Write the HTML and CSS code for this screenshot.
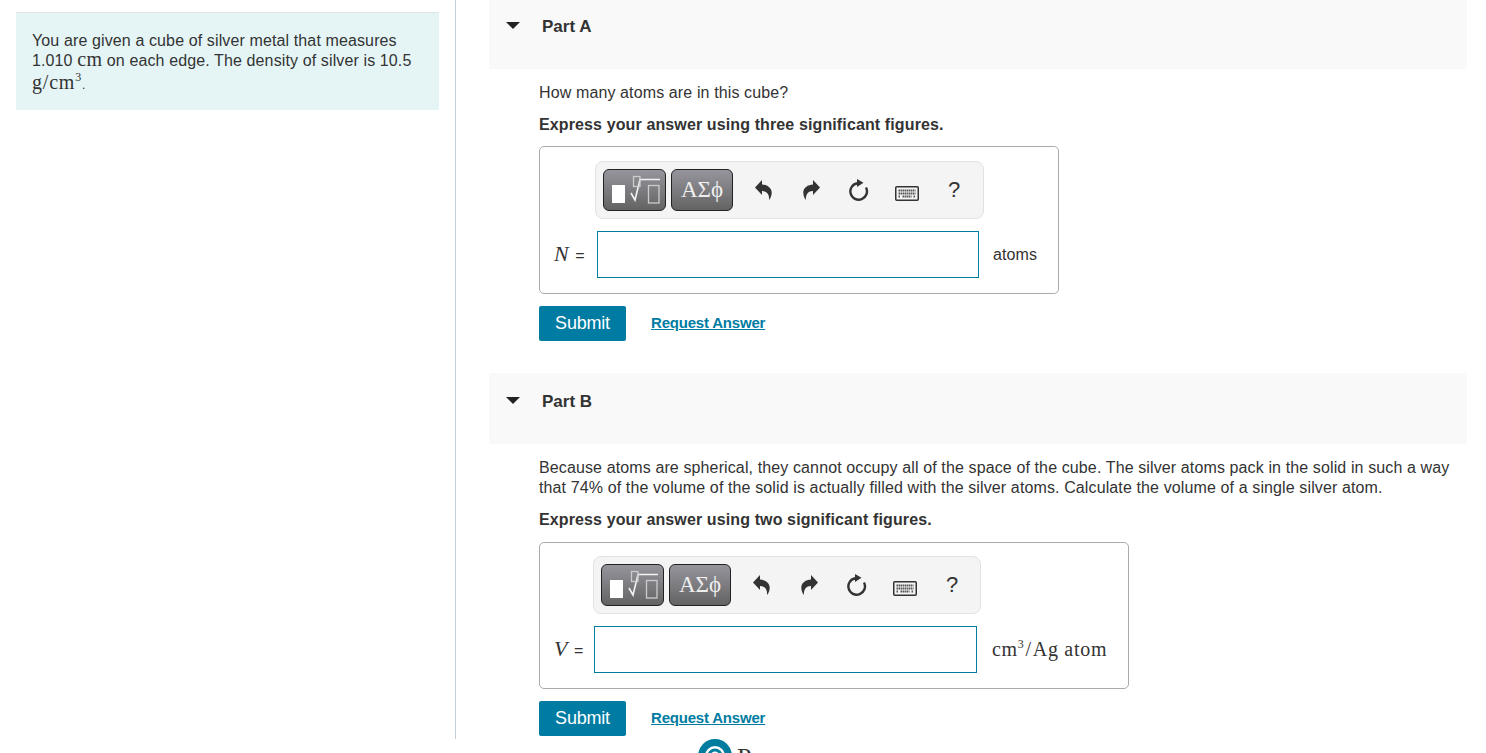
FILE: index.html
```html
<!doctype html>
<html lang="en">
  <head>
    <meta charset="UTF-8" />
    <title>Silver cube</title>
    <link rel="stylesheet" href="styles.css">
  </head>
  <body>
    <svg class="icon-defs" width="0" height="0">
      <symbol id="i-undo" viewBox="0 0 17 20"><path d="M0 7.600 7 0V4.500C12 4.500 17 8 16.700 13 16.500 16 15.500 18.500 14 20 14.500 16 13 11 7 11V15Z"/></symbol>
      <symbol id="i-redo" viewBox="0 0 17 20"><path d="M17 7.600 10 0V4.500C5 4.500 0 8 0.300 13 0.500 16 1.500 18.500 3 20 2.500 16 4 11 10 11V15Z"/></symbol>
      <symbol id="i-reset" viewBox="0 0 21 23"><path class="ring" d="M17 8.500A8.300 8.300 0 1 1 8.500 4.200"/><path d="M8 0 14.500 3.800 8 8Z"/></symbol>
      <symbol id="i-keys" viewBox="0 0 24 15"><rect class="key-frame" x="0.750" y="0.750" width="22.500" height="13.500" rx="1"/><path class="key-row" d="M3.500 4.500H20.500M3.500 7.500H20.500M3.500 10.500H5.500M7.500 10.500H16.500M18.500 10.500H20.500"/></symbol>
    </svg>

    <div class="page">
      <aside class="sidebar">
        <div class="intro">
          You are given a cube of silver metal that measures
          1.010 <span class="math inline">cm</span> on each edge. The density of silver is 10.5
          <span class="math density">g/cm<sup>3</sup></span><span class="dot">.</span>
        </div>
      </aside>

      <main class="parts">
        <section class="part part-a">
          <header class="part-head">
            <span class="caret"></span>
            <h2>Part A</h2>
          </header>
          <div class="part-body">
            <p>How many atoms are in this cube?</p>
            <p class="hint">Express your answer using three significant figures.</p>

            <div class="answer answer-a">
              <div class="toolbar">
                <button class="tpl-btn tpl-root">
                  <span class="block"></span>
                  <svg class="root" viewBox="0 0 32 30"><path class="radical" d="M2 18 6 25 11 4.500H31"/><rect x="4.500" y="1.500" width="6.500" height="10"/><rect x="19.500" y="10.500" width="10.500" height="17.500"/></svg>
                </button>
                <button class="tpl-btn tpl-greek">ΑΣϕ</button>
                <span class="tools">
                  <svg class="tool undo"><use href="#i-undo"/></svg>
                  <svg class="tool redo"><use href="#i-redo"/></svg>
                  <svg class="tool reset"><use href="#i-reset"/></svg>
                  <svg class="tool keys"><use href="#i-keys"/></svg>
                  <span class="help">?</span>
                </span>
              </div>
              <div class="entry">
                <label><span class="var">N</span> =</label>
                <input type="text">
                <span class="unit">atoms</span>
              </div>
            </div>

            <div class="actions">
              <button class="submit">Submit</button>
              <a href="#">Request Answer</a>
            </div>
          </div>
        </section>

        <section class="part part-b">
          <header class="part-head">
            <span class="caret"></span>
            <h2>Part B</h2>
          </header>
          <div class="part-body">
            <p>Because atoms are spherical, they cannot occupy all of the space of the cube. The silver atoms pack in the solid in such a way that 74% of the volume of the solid is actually filled with the silver atoms. Calculate the volume of a single silver atom.</p>
            <p class="hint">Express your answer using two significant figures.</p>

            <div class="answer answer-b">
              <div class="toolbar">
                <button class="tpl-btn tpl-root">
                  <span class="block"></span>
                  <svg class="root" viewBox="0 0 32 30"><path class="radical" d="M2 18 6 25 11 4.500H31"/><rect x="4.500" y="1.500" width="6.500" height="10"/><rect x="19.500" y="10.500" width="10.500" height="17.500"/></svg>
                </button>
                <button class="tpl-btn tpl-greek">ΑΣϕ</button>
                <span class="tools">
                  <svg class="tool undo"><use href="#i-undo"/></svg>
                  <svg class="tool redo"><use href="#i-redo"/></svg>
                  <svg class="tool reset"><use href="#i-reset"/></svg>
                  <svg class="tool keys"><use href="#i-keys"/></svg>
                  <span class="help">?</span>
                </span>
              </div>
              <div class="entry">
                <label><span class="var">V</span> =</label>
                <input type="text">
                <span class="unit math">cm<sup>3</sup><span class="slash">/</span>Ag atom</span>
              </div>
            </div>

            <div class="actions">
              <button class="submit">Submit</button>
              <a href="#">Request Answer</a>
            </div>
          </div>
        </section>

        <footer class="brand">
          <svg class="brand-mark" viewBox="0 0 34 34"><circle class="mark-outer" cx="17" cy="17" r="13.500"/><circle class="mark-inner" cx="17" cy="17" r="6"/></svg>
          <span class="brand-name">Pearson</span>
        </footer>
      </main>
    </div>
  </body>
</html>
```

FILE: styles.css
```css
* {
  margin: 0;
  padding: 0;
  box-sizing: border-box;
}

html,
body {
  height: 753px;
  overflow: hidden;
}

body {
  font-family: 'Liberation Sans', Arial, sans-serif;
  font-size: 16px;
  line-height: 20px;
  letter-spacing: 0.12px;
  color: #333;
  background: white;
}

.icon-defs {
  display: block;
  height: 0;
}

.page {
  display: flex;
  height: 739px;
}

.sidebar {
  width: 456px;
  flex-shrink: 0;
  padding: 12px 16px 0;
  border-right: 1px solid #c4cdd8;
}

.intro {
  width: 423px;
  height: 98px;
  padding: 18px 16px 0;
  background: #e5f5f6;
  border-top: 1px solid #dde3e6;
}

.math {
  font-family: 'Liberation Serif', serif;
  font-size: 20px;
  letter-spacing: 0.3px;
}

.math.inline {
  line-height: 0;
}

.math.density {
  line-height: 22px;
  letter-spacing: 0.8px;
}

.math sup {
  font-size: 12px;
  line-height: 0;
}

.dot {
  font-size: 12px;
}

.parts {
  width: 978px;
  margin-left: 33px;
  flex-shrink: 0;
}

.part-head {
  display: flex;
  align-items: flex-start;
  height: 69px;
  padding: 17px 0 0 17px;
  background: #f9f9f9;
}

.part-b .part-head {
  height: 71px;
  padding-top: 19px;
}

.part-head h2 {
  font-size: 17px;
  font-weight: bold;
  letter-spacing: 0;
  margin-left: 22px;
}

.caret {
  width: 0;
  height: 0;
  margin-top: 5px;
  border-left: 7px solid transparent;
  border-right: 7px solid transparent;
  border-top: 7px solid #222;
}

.part-body {
  padding: 14px 10px 32px 50px;
}

.part-body p {
  margin-bottom: 12px;
}

.part-body .hint {
  font-weight: bold;
  margin-bottom: 12px;
}

.part-a .hint {
  margin-bottom: 11px;
}

.answer {
  border: 1px solid #aaa;
  border-radius: 5px;
}

.answer-a {
  width: 520px;
  height: 148px;
  padding: 14px 0 0 55px;
}

.answer-b {
  width: 590px;
  height: 147px;
  margin-top: 1px;
  padding: 13px 0 0 53px;
}

.toolbar {
  display: flex;
  align-items: center;
  width: 389px;
  height: 58px;
  padding-left: 7px;
  background: #f4f4f4;
  border: 1px solid #e2e2e2;
  border-radius: 8px;
}

.answer-b .toolbar {
  width: 388px;
}

.tpl-btn {
  height: 42px;
  border: 1px solid #222;
  border-radius: 6px;
  background: linear-gradient(#96959d, #636363);
  color: #eee;
}

.tpl-root {
  display: flex;
  align-items: center;
  width: 63px;
  padding-left: 8px;
}

.block {
  width: 13px;
  height: 18px;
  margin-top: 8px;
  background: white;
}

.root {
  width: 32px;
  height: 30px;
  margin-left: 4px;
  fill: none;
  stroke: #ccc;
  stroke-width: 1.300;
}

.root .radical {
  stroke: #f2f2f2;
  stroke-width: 1.600;
}

.tpl-greek {
  width: 62px;
  margin-left: 5px;
  font-family: 'Liberation Serif', 'DejaVu Serif', serif;
  font-size: 23px;
  letter-spacing: 0;
}

.tools {
  display: flex;
  align-items: center;
  margin-left: 22px;
}

.tool {
  fill: #333;
}

.undo,
.redo {
  width: 17px;
  height: 20px;
}

.redo {
  margin-left: 31px;
}

.reset {
  width: 21px;
  height: 23px;
  margin-left: 29px;
}

.ring {
  fill: none;
  stroke: #333;
  stroke-width: 2.400;
}

.keys {
  width: 24px;
  height: 15px;
  margin-left: 25px;
  margin-top: 7px;
}

.key-frame {
  fill: #f4f4f4;
  stroke: #333;
  stroke-width: 1.500;
}

.key-row {
  fill: none;
  stroke: #555;
  stroke-width: 2;
  stroke-dasharray: 1.500 0.500;
}

.help {
  margin-left: 29px;
  font-size: 22px;
  letter-spacing: 0;
}

.entry {
  display: flex;
  align-items: center;
  margin-top: 12px;
  margin-left: -41px;
}

.entry label {
  width: 43px;
  font-size: 16px;
  letter-spacing: 0;
  white-space: nowrap;
}

.var {
  font-family: 'Liberation Serif', serif;
  font-style: italic;
  font-size: 22px;
  letter-spacing: 2px;
}

.entry input {
  height: 47px;
  border: 1px solid #007c9e;
  background: white;
}

.answer-a .entry input {
  width: 382px;
}

.answer-b .entry {
  margin-left: -39px;
}

.answer-b .entry label {
  width: 40px;
}

.answer-b .entry input {
  width: 383px;
}

.unit {
  margin-left: 14px;
}

.answer-b .unit {
  margin-left: 15px;
  padding-bottom: 2px;
  letter-spacing: 0.7px;
  white-space: nowrap;
}

.slash {
  margin: 0 1px 0 1px;
}

.actions {
  display: flex;
  align-items: center;
  margin-top: 12px;
}

.submit {
  width: 87px;
  height: 35px;
  background: #007ca2;
  border: none;
  border-radius: 2px;
  color: white;
  font-family: inherit;
  font-size: 18px;
  letter-spacing: -0.2px;
}

.actions a {
  margin-left: 25px;
  padding-bottom: 2px;
  font-size: 15px;
  font-weight: bold;
  letter-spacing: -0.2px;
  color: #007ca2;
}

.brand {
  display: flex;
  gap: 5px;
  margin-left: 209px;
  margin-top: -29px;
}

.brand-mark {
  width: 34px;
  height: 34px;
  flex-shrink: 0;
  fill: none;
  stroke: #007c9e;
}

.mark-outer {
  stroke-width: 7;
}

.mark-inner {
  stroke-width: 3;
}

.brand-name {
  font-family: 'Liberation Serif', serif;
  font-size: 26px;
  line-height: 30px;
  padding-top: 4px;
}
```
